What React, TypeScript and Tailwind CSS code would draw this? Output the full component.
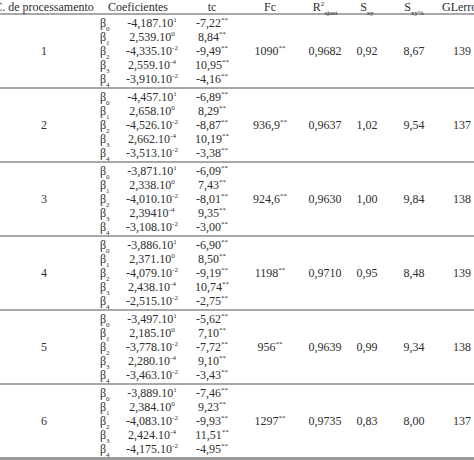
import React from "react";

type Group = {
  id: string;
  coefs: [string, string][]; // [mantissa, exponent]
  tc: string[];
  fc: string;
  r2: string;
  sxy: string;
  sxyp: string;
  gl: string;
};

const groups: Group[] = [
  {
    id: "1",
    coefs: [["-4,187.10", "1"], ["2,539.10", "0"], ["-4,335.10", "-2"], ["2,559.10", "-4"], ["-3,910.10", "-2"]],
    tc: ["-7,22", "8,84", "-9,49", "10,95", "-4,16"],
    fc: "1090",
    r2: "0,9682",
    sxy: "0,92",
    sxyp: "8,67",
    gl: "139",
  },
  {
    id: "2",
    coefs: [["-4,457.10", "1"], ["2,658.10", "0"], ["-4,526.10", "-2"], ["2,662.10", "-4"], ["-3,513.10", "-2"]],
    tc: ["-6,89", "8,29", "-8,87", "10,19", "-3,38"],
    fc: "936,9",
    r2: "0,9637",
    sxy: "1,02",
    sxyp: "9,54",
    gl: "137",
  },
  {
    id: "3",
    coefs: [["-3,871.10", "1"], ["2,338.10", "0"], ["-4,010.10", "-2"], ["2,39410", "-4"], ["-3,108.10", "-2"]],
    tc: ["-6,09", "7,43", "-8,01", "9,35", "-3,00"],
    fc: "924,6",
    r2: "0,9630",
    sxy: "1,00",
    sxyp: "9,84",
    gl: "138",
  },
  {
    id: "4",
    coefs: [["-3,886.10", "1"], ["2,371.10", "0"], ["-4,079.10", "-2"], ["2,438.10", "-4"], ["-2,515.10", "-2"]],
    tc: ["-6,90", "8,50", "-9,19", "10,74", "-2,75"],
    fc: "1198",
    r2: "0,9710",
    sxy: "0,95",
    sxyp: "8,48",
    gl: "139",
  },
  {
    id: "5",
    coefs: [["-3,497.10", "1"], ["2,185.10", "0"], ["-3,778.10", "-2"], ["2,280.10", "-4"], ["-3,463.10", "-2"]],
    tc: ["-5,62", "7,10", "-7,72", "9,10", "-3,43"],
    fc: "956",
    r2: "0,9639",
    sxy: "0,99",
    sxyp: "9,34",
    gl: "138",
  },
  {
    id: "6",
    coefs: [["-3,889.10", "1"], ["2,384.10", "0"], ["-4,083.10", "-2"], ["2,424.10", "-4"], ["-4,175.10", "-2"]],
    tc: ["-7,46", "9,23", "-9,93", "11,51", "-4,95"],
    fc: "1297",
    r2: "0,9735",
    sxy: "0,83",
    sxyp: "8,00",
    gl: "137",
  },
];

const Sup = ({ children }: { children: React.ReactNode }) => (
  <span className="relative -top-[5px] text-[7px] leading-none">{children}</span>
);

const Sub = ({ children }: { children: React.ReactNode }) => (
  <span className="relative top-[4px] text-[7px] leading-none">{children}</span>
);

const GroupBlock = ({ g, last }: { g: Group; last: boolean }) => {
  return (
    <div className={`flex items-center ${last ? "border-b-[3px] border-[#9a9a9a]" : "border-b-2 border-[#a8a8a8]"}`}>
      <div className="w-[88px] shrink-0 text-center">{g.id}</div>
      <div className="flex flex-col py-[1px]">
        {g.coefs.map((c, i) => (
          <div key={i} className="flex h-[14px] items-center">
            <div className="w-[34px] pl-[12px]">
              β<Sub>{i}</Sub>
            </div>
            <div className="w-[60px] text-center whitespace-nowrap">
              {c[0]}
              <Sup>{c[1]}</Sup>
            </div>
            <div className="w-[60px] text-center whitespace-nowrap">
              {g.tc[i]}
              <Sup>**</Sup>
            </div>
          </div>
        ))}
      </div>
      <div className="w-[56px] shrink-0 text-center whitespace-nowrap">
        {g.fc}
        <Sup>**</Sup>
      </div>
      <div className="w-[54px] shrink-0 text-center">{g.r2}</div>
      <div className="w-[30px] shrink-0 text-center">{g.sxy}</div>
      <div className="w-[64px] shrink-0 text-center">{g.sxyp}</div>
      <div className="w-[32px] shrink-0 text-center">{g.gl}</div>
    </div>
  );
};

export default function App() {
  return (
    <div className="w-[474px] h-[460px] overflow-hidden bg-white text-[#2e2e2e] text-[12px] leading-none font-['Liberation_Serif',serif]">
      <div className="w-[478px]">
        <div className="flex h-[15px] items-center border-b-2 border-[#a8a8a8] whitespace-nowrap">
          <div className="w-[88px] shrink-0 flex justify-center">
            <span className="whitespace-nowrap">C. de processamento</span>
          </div>
          <div className="w-[94px] shrink-0 pl-[20px]">Coeficientes</div>
          <div className="w-[60px] shrink-0 text-center">tc</div>
          <div className="w-[56px] shrink-0 text-center">Fc</div>
          <div className="w-[54px] shrink-0 text-center">
            R<Sup>2</Sup>
            <Sub>ajust</Sub>
          </div>
          <div className="w-[30px] shrink-0 text-center">
            S<Sub>xy</Sub>
          </div>
          <div className="w-[64px] shrink-0 text-center">
            S<Sub>xy%</Sub>
          </div>
          <div className="w-[32px] shrink-0 -ml-[4px]">GLerro</div>
        </div>
        {groups.map((g, i) => (
          <GroupBlock key={g.id} g={g} last={i === groups.length - 1} />
        ))}
      </div>
    </div>
  );
}
